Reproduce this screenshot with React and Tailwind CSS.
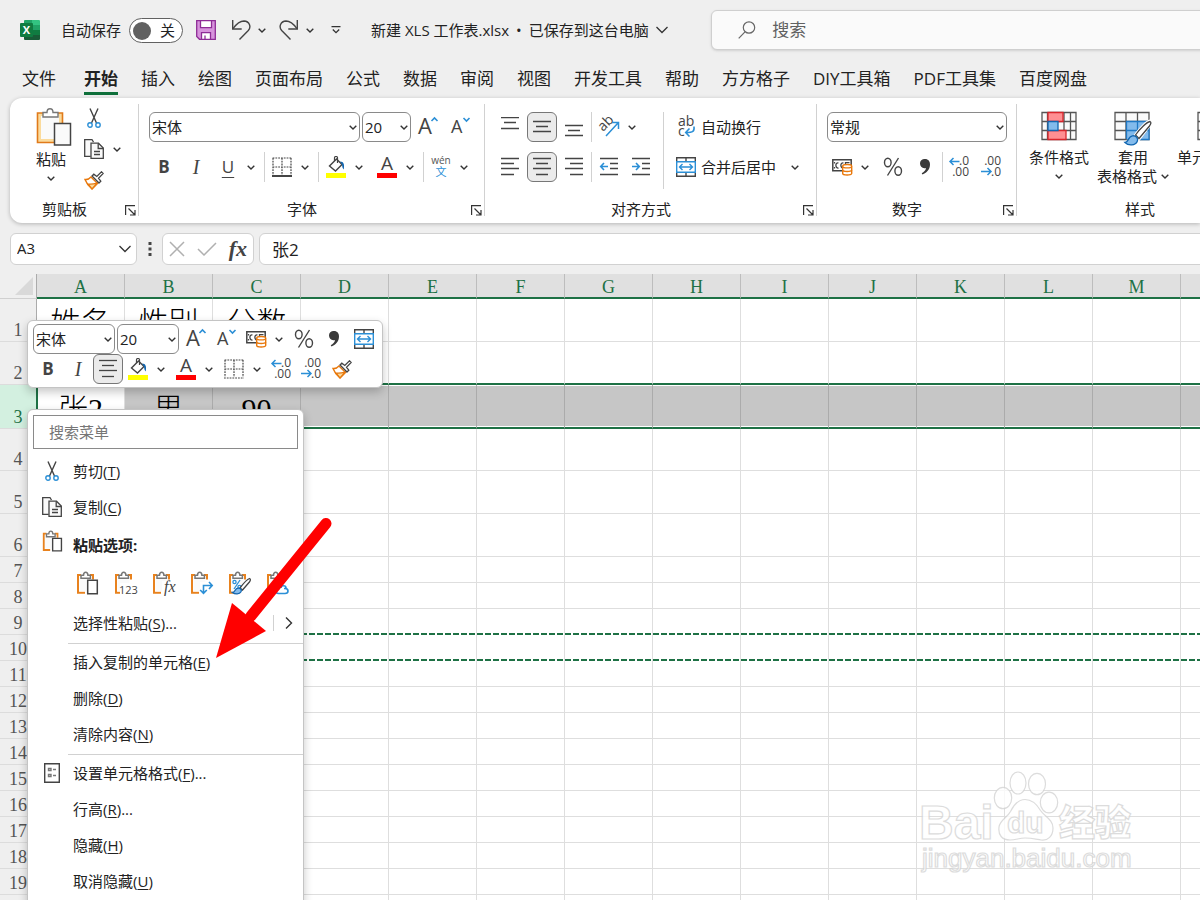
import React from 'react';
import clsx from 'clsx';

/* ---------- icons ---------- */

const Chevron = ({ className = 'w-2 h-[5px]' }) => (
    <svg viewBox="0 0 8 5" className={className} fill="none" stroke="#333" strokeWidth="1.4">
        <path d="M.7.7 4 4 7.3.7" />
    </svg>
);

const WideChevron = () => (
    <svg width="12" height="8" viewBox="0 0 12 8" fill="none" stroke="#333" strokeWidth="1.3">
        <path d="M.5 1 6 6.5 11.5 1" />
    </svg>
);

const ExcelLogo = () => (
    <svg width="20" height="20" viewBox="0 0 20 20" className="shrink-0">
        <path d="M5 0h7v5H4V1a1 1 0 0 1 1-1z" fill="#21a366" />
        <path d="M12 0h7a1 1 0 0 1 1 1v4h-8z" fill="#33c481" />
        <path d="M4 5h8v5H4z" fill="#107c41" />
        <path d="M12 5h8v5h-8z" fill="#21a366" />
        <path d="M4 10h8v10H5a1 1 0 0 1-1-1z" fill="#185c37" />
        <path d="M12 10h8v5h-8z" fill="#107c41" />
        <path d="M12 15h8v4a1 1 0 0 1-1 1h-7z" fill="#185c37" />
        <rect y="3" width="13" height="14" rx="1" fill="#107c41" />
        <text x="6.5" y="14" textAnchor="middle" fontSize="11" fontWeight="700" fill="#fff">X</text>
    </svg>
);

const SaveIcon = () => (
    <svg width="20" height="20" viewBox="0 0 20 20" stroke="#8e2c96" strokeWidth="1.3">
        <path d="M.7.7h18.6v18.6H3.500L.7 16.500z" fill="#d793dc" />
        <path d="M4.500.7h11v7h-11z" fill="#fff" />
        <path d="M5.500 19.3v-6.6h9v6.6z" fill="#fff" />
        <path d="M9 15.500v3.8" fill="none" />
    </svg>
);

const UndoIcon = ({ className }) => (
    <svg width="20" height="22" viewBox="0 0 20 22" className={className} fill="none" stroke="#444" strokeWidth="1.4">
        <path d="M1.7 1v9h9" />
        <path d="M2 9.700C5 5.500 8.500 2 13 2c5.500.3 7.500 6 4.300 9.500L8.500 20.500" />
    </svg>
);

const SearchIcon = () => (
    <svg width="18" height="18" viewBox="0 0 18 18" fill="none" stroke="#666" strokeWidth="1.2">
        <circle cx="11" cy="6.5" r="5.7" />
        <path d="M7 10.800.7 17.300" />
    </svg>
);

const PasteLarge = () => (
    <svg width="36" height="38" viewBox="0 0 36 38" className="self-end">
        <path d="M1.500 5h25v29.500h-25z" fill="#fbdb9c" stroke="#e07a1a" strokeWidth="1.6" />
        <path d="M5 8h18v23H5z" fill="#fafafa" />
        <path d="M7 9V4.500h4c0-5 6-5 6 0h5V9z" fill="#fff" stroke="#777" strokeWidth="1.4" />
        <path d="M18.500 15.500h16v21.500h-16z" fill="#fafafa" stroke="#444" strokeWidth="1.5" />
    </svg>
);

const CutIcon = () => (
    <svg width="14" height="20" viewBox="0 0 14 20" fill="none" strokeWidth="1.4">
        <path d="M3 .5 9.500 15M11 .5 4.500 15" stroke="#444" />
        <circle cx="3" cy="17" r="2.200" stroke="#2b8fd6" />
        <circle cx="11" cy="17" r="2.200" stroke="#2b8fd6" />
    </svg>
);

const CopyIcon = () => (
    <svg width="20" height="20" viewBox="0 0 20 20" fill="#fafafa" stroke="#444" strokeWidth="1.3">
        <path d="M9.500 3 8 .7H.7v16.600h6" />
        <path d="M7 4.200h7.500l4.800 4.800v10.300H7z" />
        <path d="M14.200 4.500v5h5M10 12.500h6M10 15.500h6" fill="none" />
    </svg>
);

const BrushIcon = () => (
    <svg width="20" height="19" viewBox="0 0 20 19">
        <path d="M1 8.500c2 .3 4-.3 6-2.500l6.500 6.500c-1.500 1.500-3.500 3.500-5.500 5.500C5 15.500 2.500 12.500 1 8.500z" fill="#fff" stroke="#e8780c" strokeWidth="1.4" />
        <path d="M4 13c3 .5 5 .3 9-.8L8 17.800z" fill="#fbdb9c" stroke="#e8780c" strokeWidth="1.2" />
        <path d="m8 5 1.800-1.800 3 2.300L17.500.8l1.700 1.700-4.700 4.700 2.300 3-1.800 1.800z" fill="#fff" stroke="#444" strokeWidth="1.3" />
    </svg>
);

const Launcher = () => (
    <svg width="11" height="11" viewBox="0 0 11 11" fill="none" stroke="#333" strokeWidth="1.2">
        <path d="M.6 10V.6H10M3.500 3.500l6 6M10 5v5H5" />
    </svg>
);

const GrowFont = ({ down }) => (
    <svg width="22" height="20" viewBox="0 0 22 20" className="overflow-visible">
        <text x={down ? 2 : 1} y={down ? 16 : 17} fontSize={down ? 18 : 22} fill="#444">A</text>
        <path d={down ? 'M14.500 1l3 3 3-3' : 'M14.500 4l3-3 3 3'} fill="none" stroke="#2b8fd6" strokeWidth="1.6" />
    </svg>
);

const BordersIcon = ({ bottom }) => (
    <svg width="20" height="20" viewBox="0 0 20 20" fill="none" stroke="#444" strokeWidth="1.2">
        <path d="M.6 1h18.800M.6 10h18.800M1 1v17M10 1v17M19 1v17" strokeDasharray="1.800 1" />
        <path d="M0 19h20" strokeWidth={bottom ? 2 : 1} strokeDasharray={bottom ? undefined : '1.8 1'} />
    </svg>
);

const FillIcon = () => (
    <svg width="20" height="22" viewBox="0 0 20 22">
        <path d="M10.500 3 3.500 10l6 5 6.500-6.500z" fill="#fff" stroke="#444" strokeWidth="1.4" />
        <path d="M8.500 5V1.800c0-1.800 3-1.800 3 0V7" fill="none" stroke="#444" strokeWidth="1.2" />
        <path d="M14 5.500c4 0 4.500 3 3.800 8-1.300-1-1.600-3-1.800-5z" fill="#1166b0" />
        <path d="M0 17h20v5H0z" fill="#ff0" />
    </svg>
);

const FontColorIcon = () => (
    <svg width="20" height="22" viewBox="0 0 20 22" className="overflow-visible">
        <text x="10" y="14" textAnchor="middle" fontSize="19" fill="#444">A</text>
        <path d="M0 17h20v5H0z" fill="red" />
    </svg>
);

const PhoneticIcon = () => (
    <svg width="22" height="22" viewBox="0 0 22 22" textAnchor="middle" className="overflow-visible">
        <text x="11" y="8" fontSize="10" fill="#555">wén</text>
        <text x="11" y="20" fontSize="11" fill="#2b8fd6">文</text>
    </svg>
);

/* lines: [x1, x2, y] */
const Lines = ({ lines, children }) => (
    <svg width="20" height="20" viewBox="0 0 20 20" fill="none">
        {lines.map(([a, b, y]) => (
            <path key={y} d={`M${a} ${y}.5H${b}`} stroke="#444" strokeWidth="1.3" />
        ))}
        {children}
    </svg>
);

const AlignTop = () => <Lines lines={[[1, 19, 0], [4, 16, 5], [1, 19, 11]]} />;
const AlignMiddle = () => <Lines lines={[[1, 19, 4], [4, 16, 9], [1, 19, 14]]} />;
const AlignBottom = () => <Lines lines={[[1, 19, 8], [4, 16, 13], [1, 19, 18]]} />;
const AlignLeft = () => <Lines lines={[[1, 19, 1], [1, 14, 6], [1, 19, 11], [1, 14, 17]]} />;
const AlignCenter = () => <Lines lines={[[1, 19, 1], [4, 16, 6], [1, 19, 11], [4, 16, 17]]} />;
const AlignRight = () => <Lines lines={[[1, 19, 1], [6, 19, 6], [1, 19, 11], [6, 19, 17]]} />;

const Outdent = () => (
    <Lines lines={[[1, 19, 1], [11, 19, 6], [11, 19, 11], [1, 19, 17]]}>
        <path d="M9 9.500H2M5 6 1.700 9.500 5 13" stroke="#2b8fd6" strokeWidth="1.6" />
    </Lines>
);

const Indent = () => (
    <Lines lines={[[1, 19, 1], [11, 19, 6], [11, 19, 11], [1, 19, 17]]}>
        <path d="M1 9.500h7M5 6l3.300 3.500L5 13" stroke="#2b8fd6" strokeWidth="1.6" />
    </Lines>
);

const OrientIcon = () => (
    <svg width="22" height="22" viewBox="0 0 22 22" className="overflow-visible">
        <text x="5" y="16" fontSize="14" fill="#444" transform="rotate(-45 5 16)">ab</text>
        <path d="M8 20 20 7M14 6.500h6.500V13" fill="none" stroke="#2b8fd6" strokeWidth="1.5" />
    </svg>
);

const WrapIcon = () => (
    <svg width="20" height="22" viewBox="0 0 20 22" className="overflow-visible">
        <text x="2" y="10" fontSize="14" fill="#444">ab</text>
        <text x="2" y="20" fontSize="14" fill="#444">c</text>
        <path d="M18 10.500c.6 5-1 6-8 6M13.500 12.500 9.700 16.500l3.800 4" fill="none" stroke="#2b8fd6" strokeWidth="1.6" />
    </svg>
);

const MergeIcon = () => (
    <svg width="20" height="20" viewBox="0 0 20 20" fill="none" stroke="#444" strokeWidth="1.4">
        <path d="M.7.7h18.600v18.600H.7zM10 1v18" />
        <path d="M.7 4.700h18.600v10.600H.7z" fill="#fff" stroke="#2b8fd6" />
        <path d="M4 10h12M6.500 7 3.500 10l3 3M13.500 7l3 3-3 3" stroke="#2b8fd6" />
    </svg>
);

const AccountingIcon = () => (
    <svg width="21" height="18" viewBox="0 0 21 18" fill="none">
        <path d="M.8 1.800h18.400v11H.8z" stroke="#444" strokeWidth="1.5" />
        <path d="M6.500 5C3 4 3 10.500 6.500 10M11.500 5C8 4 8 10.500 11.500 10M13.500 6V4.600h4M2.500 4v1.500M2.500 9v1.500" stroke="#444" strokeWidth="1.3" />
        <path d="M10.700 8.500v7c0 2 9 2 9 0v-7" fill="#fff" stroke="#e8780c" strokeWidth="1.4" />
        <ellipse cx="15.2" cy="8.2" rx="4.5" ry="1.7" fill="#fff" stroke="#e8780c" strokeWidth="1.4" />
        <path d="M10.700 12c0 2 9 2 9 0" stroke="#e8780c" strokeWidth="1.4" />
    </svg>
);

const PercentIcon = () => (
    <svg width="20" height="20" viewBox="0 0 20 20" fill="none" stroke="#444" strokeWidth="1.4">
        <ellipse cx="4.8" cy="5.5" rx="3.3" ry="4.3" />
        <ellipse cx="15.2" cy="14" rx="3.3" ry="4.3" />
        <path d="M15.500 1 4.500 18.500" />
    </svg>
);

const CommaIcon = () => (
    <svg width="12" height="18" viewBox="0 0 12 18" fill="#3a3a3a">
        <path d="M5 1c4-.5 6 2 6 5.500 0 5-3.500 8.500-7.500 10l-.8-1.200c2.300-1.200 4-3 4.300-5.300C3.500 11 1 8.700 1 5.500 1 3 2.500 1.200 5 1z" />
    </svg>
);

const DecimalIcon = ({ less }) => (
    <svg width="22" height="22" viewBox="0 0 22 22" fill="#444" fontSize="12" textAnchor="end" className="overflow-visible">
        <text x="20" y="9">{less ? '.00' : '.0'}</text>
        <text x="20" y="20">{less ? '.0' : '.00'}</text>
        <path
            d={less ? 'M0 15.500h10M6.500 12l3.500 3.500L6.500 19' : 'M10.500 5.500H1M4.500 2 1 5.500 4.500 9'}
            fill="none"
            stroke="#2b8fd6"
            strokeWidth="1.5"
        />
    </svg>
);

const ConditionalIcon = () => (
    <svg width="36" height="30" viewBox="0 0 36 30" strokeWidth="1.3">
        <path d="M1 1.500h34v27H1zM1 10.500h34M1 19.500h34M6.500 1.500v27M29.500 1.500v27M23 1.500v27" fill="#fafafa" stroke="#555" />
        <path d="M7 1.500h15v9H7zM7 19.500h18v9H7z" fill="#ff8f92" stroke="#d8262c" />
        <path d="M7 10.500h10v9H7z" fill="#83bbec" stroke="#1166b0" />
    </svg>
);

const TableFormatIcon = () => (
    <svg width="40" height="36" viewBox="0 0 40 36" strokeWidth="1.3">
        <path d="M2 1.500h34v27H2zM2 10.500h34M2 19.500h34M13 1.500v27M24.500 1.500v27" fill="#fafafa" stroke="#555" />
        <path d="M13.500 10.500H36v18H13.500z" fill="#83bbec" />
        <path d="M13.500 28V10.500H36M13.500 19.500H36M24.500 10.500v18M36 10.500v18H26" fill="none" stroke="#1f78c4" />
        <path d="M37 10c1.500.8 1 2-.5 4.500L26 28l-4-3.500C27 17.500 34 10.500 37 10z" fill="#fff" stroke="#fff" strokeWidth="3" />
        <path d="M37 10.500c1.500.8 1 2-.5 4.500L26 27.500 22.500 24C27 17.500 34 11 37 10.500z" fill="#fff" stroke="#444" />
        <path d="M12 31.500c4 .2 2.500-6 7.500-6.700 3.500-.5 6 2.500 4.800 5.500-1.800 4.500-9 4.700-12.300 1.200z" fill="#83bbec" stroke="#1166b0" />
    </svg>
);

const CellStyleIcon = () => (
    <svg width="36" height="30" viewBox="0 0 36 30" strokeWidth="1.3">
        <path d="M1 1.500h34v27H1zM1 10.500h34M1 19.500h34M12 1.500v27" fill="#fafafa" stroke="#555" />
        <path d="M7 10.500h22v12H7z" fill="#83bbec" stroke="#1166b0" />
    </svg>
);

/* Clipboard with a small drawing in its lower right corner */
const ClipIcon = ({ size = 24, children }) => (
    <svg width={size} height={size} viewBox="0 0 24 24" fill="none" className="overflow-visible">
        <path d="M10 21.800H3V4h3M15 4h3v4.500" stroke="#e8821e" strokeWidth="2" />
        <path d="M4.500 5.500h12v14.800h-12z" fill="#fafafa" />
        <path d="M6 7.300V4.200h2.500c.2-4 4.200-4 4.400 0h2.500v3.100z" fill="#fff" stroke="#777" strokeWidth="1.5" />
        {children}
    </svg>
);

const ClipPage = ({ size }) => (
    <ClipIcon size={size}>
        <path d="M12.700 9.200h9.600v13.600h-9.600z" fill="#fff" stroke="#444" strokeWidth="1.5" />
    </ClipIcon>
);

const ClipValues = () => (
    <ClipIcon>
        <path d="M7 12h17v12H7z" fill="#fff" />
        <text x="6" y="23" fontSize="11" fill="#444">123</text>
    </ClipIcon>
);

const ClipFormula = () => (
    <ClipIcon>
        <path d="M11 10h12v14H11z" fill="#fff" />
        <text x="13" y="21" fontSize="16" fontStyle="italic" fontFamily="Liberation Serif, serif" fill="#444">fx</text>
    </ClipIcon>
);

const ClipTranspose = () => (
    <ClipIcon>
        <path d="M11 11h12v13H11z" fill="#fff" />
        <path d="M14.500 22V14.500H23M20 11l3.200 3.500L20 18M11.200 19l3.300 3.300 3.300-3.300" stroke="#2b8fd6" strokeWidth="1.6" />
    </ClipIcon>
);

const ClipFormat = () => (
    <ClipIcon>
        <circle cx="7.500" cy="11" r="1.600" stroke="#2b8fd6" strokeWidth="1.300" />
        <circle cx="12.500" cy="16" r="1.600" stroke="#2b8fd6" strokeWidth="1.300" />
        <path d="m13 9-6 9" stroke="#2b8fd6" strokeWidth="1.300" />
        <path d="M22.500 7.500c1.500.5 1 2-.3 3.800L15.500 19 13 17c3-4 6.500-8.500 9.500-9.500z" fill="#fff" stroke="#444" strokeWidth="1.3" />
        <path d="M5.500 21.500c3 0 2-4 5.500-4.400 2.500-.2 4 1.800 3 3.700-1.500 2.700-6 2.700-8.500.7z" fill="#83bbec" stroke="#1166b0" strokeWidth="1.3" />
    </ClipIcon>
);

const ClipLink = () => (
    <ClipIcon>
        <path d="M11 14h12v10H11z" fill="#fff" />
        <path d="M15 22.500h-1.500c-3.500 0-3.500-5 0-5H15M14 22.500h6c4 0 4-5 0-5h-1M16 17c0-3 5-3 5 0" stroke="#2b8fd6" strokeWidth="1.6" />
    </ClipIcon>
);

const FormatCellsIcon = () => (
    <svg width="16" height="20" viewBox="0 0 16 20" fill="none" stroke="#444">
        <path d="M.7.7h14.600v18.600H.7z" strokeWidth="1.4" />
        <path d="M4.500 5.500h2.500v2H4.500zM4.500 11.500h2.500v2H4.500z" stroke="#777" strokeWidth="1.4" />
        <path d="M9 6.500h3M9 12.500h3" stroke="#777" strokeWidth="1.4" />
    </svg>
);

/* ---------- small controls ---------- */

const IconButton = ({ label, active, children }) => (
    <button
        aria-label={label}
        className={clsx(
            'flex h-[30px] w-[30px] shrink-0 items-center justify-center rounded-md text-[#444]',
            active && 'border border-[#777] bg-[#ebebeb]'
        )}
    >
        {children}
    </button>
);

const DropButton = ({ label }) => (
    <button aria-label={`${label}选项`} className="flex h-[30px] w-4 shrink-0 items-center justify-center">
        <Chevron />
    </button>
);

const Split = ({ label, className, children }) => (
    <div className={clsx('flex', className)}>
        <IconButton label={label}>{children}</IconButton>
        <DropButton label={label} />
    </div>
);

const Select = ({ label, value, className }) => (
    <div className={clsx('relative shrink-0', className)}>
        <select
            aria-label={label}
            defaultValue={value}
            className="block h-[30px] w-full appearance-none rounded-md border border-[#8a8a8a] bg-white pl-[2px] text-[15px] text-[#222]"
        >
            <option>{value}</option>
        </select>
        <span className="pointer-events-none absolute inset-y-0 right-[3px] flex items-center">
            <Chevron />
        </span>
    </div>
);

const Divider = ({ className = 'ml-[5px] mr-[2px]' }) => (
    <div className={clsx('h-[30px] w-px shrink-0 bg-[#d1d1d1]', className)} />
);

const BoldGlyph = () => <span className="text-[17px] font-bold">B</span>;
const ItalicGlyph = () => <span className="font-['Liberation_Serif',serif] text-[20px] italic">I</span>;

/* ---------- header ---------- */

const TitleBar = () => (
    <header className="flex h-[60px] shrink-0 items-center pl-5 text-[15px] text-[#222]">
        <ExcelLogo />
        <label htmlFor="autosave" className="ml-[21px] shrink-0">自动保存</label>
        <div className="relative ml-2 h-[25px] w-[54px] shrink-0">
            <input
                id="autosave"
                type="checkbox"
                className="block h-full w-full appearance-none rounded-full border border-[#616161] bg-white before:ml-[3px] before:mt-[3px] before:block before:size-[18px] before:rounded-full before:bg-[#616161]"
            />
            <span className="pointer-events-none absolute inset-y-0 right-2 flex items-center">关</span>
        </div>
        <button aria-label="保存" className="ml-[13px] shrink-0"><SaveIcon /></button>
        <button aria-label="撤消" className="ml-[15px] shrink-0"><UndoIcon /></button>
        <button aria-label="撤消选项" className="ml-[7px] shrink-0"><Chevron /></button>
        <button aria-label="恢复" className="ml-[13px] shrink-0"><UndoIcon className="-scale-x-100" /></button>
        <button aria-label="恢复选项" className="ml-[7px] shrink-0"><Chevron /></button>
        <button aria-label="自定义快速访问工具栏" className="ml-[17px] shrink-0">
            <svg width="10" height="8" viewBox="0 0 10 8" fill="none" stroke="#333" strokeWidth="1.3">
                <path d="M.5.7h9M1.800 3.500 5 6.700l3.200-3.200" />
            </svg>
        </button>
        <button className="ml-[30px] flex shrink-0 items-center gap-[7px]">
            <span>新建 XLS 工作表.xlsx</span>
            <span>•</span>
            <span>已保存到这台电脑</span>
            <WideChevron />
        </button>
        <label className="-mr-2 ml-auto flex h-10 w-[41.4vw] items-center gap-4 rounded-md border border-[#cfcfcf] bg-[#fafafa] pl-[26px] shadow-sm">
            <SearchIcon />
            <input
                aria-label="搜索"
                placeholder="搜索"
                className="min-w-0 flex-1 bg-transparent text-[17px] outline-none placeholder:text-[#616161]"
            />
        </label>
    </header>
);

const tabs = ['文件', '开始', '插入', '绘图', '页面布局', '公式', '数据', '审阅', '视图', '开发工具', '帮助', '方方格子', 'DIY工具箱', 'PDF工具集', '百度网盘'];

const TabBar = () => (
    <nav className="flex h-[38px] shrink-0 gap-[23px] pl-[22px] pt-[5px] text-[17px] leading-[27px] text-[#222]">
        {tabs.map((tab) => (
            <button
                key={tab}
                className={clsx(
                    'h-[30px] shrink-0 border-b-[3px]',
                    tab === '开始' ? 'ml-[5px] border-[#0f703b] font-bold' : 'border-transparent'
                )}
            >
                {tab}
            </button>
        ))}
    </nav>
);

/* ---------- ribbon ---------- */

const Group = ({ title, launcher = true, className, children }) => (
    <>
        <section className={clsx('flex shrink-0 flex-col', className)}>
            <div className="h-[95px]">{children}</div>
            <div className="flex items-center text-[15px] leading-5 text-[#222]">
                <span className="flex-1 text-center">{title}</span>
                {launcher && (
                    <button aria-label={`${title}设置`} className="mt-[3px] flex w-[19px] justify-center pl-1"><Launcher /></button>
                )}
            </div>
        </section>
        <div className="h-28 w-px shrink-0 bg-[#d1d1d1]" />
    </>
);

const LargeButton = ({ icon, lines, className, chevron }) => (
    <button className={clsx('flex shrink-0 flex-col items-center text-[15px] leading-[19px] text-[#222]', className)}>
        <span className="flex h-[37px] items-start">{icon}</span>
        <span>{lines[0]}</span>
        <span className="flex h-[19px] items-center gap-1 whitespace-nowrap">
            {lines[1]}
            {chevron && <Chevron />}
        </span>
    </button>
);

const Ribbon = () => (
    <div className="ml-[10px] flex h-[125px] shrink-0 overflow-hidden rounded-l-xl bg-white pt-[6px] shadow-[0_1px_4px_rgba(0,0,0,0.25)]">
        <Group title="剪贴板" className="w-32">
            <div className="flex pl-[20px]">
                <button className="flex w-[42px] flex-col items-center pt-[4px] text-[15px] leading-5 text-[#222]">
                    <PasteLarge />
                    <span className="mt-[3px]">粘贴</span>
                    <Chevron className="mt-[7px] h-[5px] w-2" />
                </button>
                <div className="ml-[11px] flex flex-col gap-[3px]">
                    <button aria-label="剪切" className="flex h-7 w-[22px] items-center justify-center"><CutIcon /></button>
                    <div className="flex">
                        <button aria-label="复制" className="flex h-7 w-[22px] items-center justify-center"><CopyIcon /></button>
                        <button aria-label="复制选项" className="ml-1 flex h-7 w-4 items-center justify-center"><Chevron /></button>
                    </div>
                    <button aria-label="格式刷" className="flex h-7 w-[22px] items-center justify-center"><BrushIcon /></button>
                </div>
            </div>
        </Group>

        <Group title="字体" className="w-[345px]">
            <div className="flex flex-col gap-[10px] pl-[10px] pt-2">
                <div className="flex gap-[2px]">
                    <Select label="字体" value="宋体" className="w-[211px]" />
                    <Select label="字号" value="20" className="w-[49px]" />
                    <IconButton label="增大字号"><GrowFont /></IconButton>
                    <IconButton label="减小字号"><GrowFont down /></IconButton>
                </div>
                <div className="flex">
                    <div className="flex gap-[2px]">
                        <IconButton label="加粗"><BoldGlyph /></IconButton>
                        <IconButton label="倾斜"><ItalicGlyph /></IconButton>
                        <Split label="下划线"><span className="text-[17px] underline underline-offset-4">U</span></Split>
                    </div>
                    <Divider />
                    <Split label="边框"><BordersIcon bottom /></Split>
                    <Divider />
                    <Split label="填充颜色" className="mr-[5px]"><FillIcon /></Split>
                    <Split label="字体颜色"><FontColorIcon /></Split>
                    <Divider />
                    <Split label="拼音"><PhoneticIcon /></Split>
                </div>
            </div>
        </Group>

        <Group title="对齐方式" className="w-[331px]">
            <div className="flex pl-[10px] pt-2">
                <div className="flex flex-col gap-[10px]">
                    <div className="flex">
                        <div className="flex gap-[2px]">
                            <IconButton label="顶端对齐"><AlignTop /></IconButton>
                            <IconButton label="垂直居中" active><AlignMiddle /></IconButton>
                            <IconButton label="底端对齐"><AlignBottom /></IconButton>
                        </div>
                        <Divider className="mx-[2px]" />
                        <Split label="方向"><OrientIcon /></Split>
                    </div>
                    <div className="flex">
                        <div className="flex gap-[2px]">
                            <IconButton label="左对齐"><AlignLeft /></IconButton>
                            <IconButton label="居中" active><AlignCenter /></IconButton>
                            <IconButton label="右对齐"><AlignRight /></IconButton>
                        </div>
                        <Divider className="mx-[2px]" />
                        <div className="flex gap-[2px]">
                            <IconButton label="减少缩进量"><Outdent /></IconButton>
                            <IconButton label="增加缩进量"><Indent /></IconButton>
                        </div>
                    </div>
                </div>
                <div className="ml-[7px] h-[77px] w-px bg-[#d1d1d1]" />
                <div className="ml-3 flex flex-col gap-[10px] text-[15px] text-[#222]">
                    <button className="flex h-[30px] items-center gap-[5px]">
                        <WrapIcon />
                        自动换行
                    </button>
                    <div className="flex">
                        <button className="flex h-[30px] items-center gap-[5px]">
                            <MergeIcon />
                            合并后居中
                        </button>
                        <div className="ml-[11px]"><DropButton label="合并" /></div>
                    </div>
                </div>
            </div>
        </Group>

        <Group title="数字" className="w-[199px]">
            <div className="flex flex-col gap-[10px] pl-[10px] pt-2">
                <Select label="数字格式" value="常规" className="w-[180px]" />
                <div className="flex">
                    <Split label="会计数字格式" className="mr-[5px]"><AccountingIcon /></Split>
                    <div className="flex gap-[2px]">
                        <IconButton label="百分比样式"><PercentIcon /></IconButton>
                        <IconButton label="千位分隔样式"><CommaIcon /></IconButton>
                    </div>
                    <Divider className="mx-[2px]" />
                    <div className="flex gap-[2px]">
                        <IconButton label="增加小数位数"><DecimalIcon /></IconButton>
                        <IconButton label="减少小数位数"><DecimalIcon less /></IconButton>
                    </div>
                </div>
            </div>
        </Group>

        <Group title="样式" launcher={false} className="w-[246px]">
            <div className="flex gap-[7px] pl-3 pt-[7px]">
                <LargeButton icon={<ConditionalIcon />} lines={['条件格式', '']} chevron className="w-[60px]" />
                <LargeButton icon={<TableFormatIcon />} lines={['套用', '表格格式']} chevron className="w-[74px]" />
                <LargeButton icon={<CellStyleIcon />} lines={['单元格样式', '']} chevron className="w-[75px]" />
            </div>
        </Group>
    </div>
);

/* ---------- formula bar ---------- */

const FormulaBar = () => (
    <div className="flex h-[51px] shrink-0 items-center pl-[10px] text-[#222]">
        <div className="flex h-8 w-[127px] shrink-0 items-center rounded-md border border-[#d1d1d1] bg-white pl-[6px] pr-[5px]">
            <input aria-label="名称框" defaultValue="A3" className="min-w-0 flex-1 text-[15px] outline-none" />
            <button aria-label="名称列表"><WideChevron /></button>
        </div>
        <svg width="4" height="14" viewBox="0 0 4 14" className="ml-[11px] shrink-0" fill="#444">
            <path d="M.5 0h3v3h-3zM.5 5.500h3v3h-3zM.5 11h3v3h-3z" />
        </svg>
        <div className="ml-[10px] flex h-8 w-[92px] shrink-0 items-center justify-between rounded-md border border-[#d1d1d1] bg-white px-[6px]">
            <button aria-label="取消">
                <svg width="16" height="16" viewBox="0 0 16 16" fill="none" stroke="#b0b0b0" strokeWidth="1.5">
                    <path d="m1 1 14 14M15 1 1 15" />
                </svg>
            </button>
            <button aria-label="输入">
                <svg width="20" height="14" viewBox="0 0 20 14" fill="none" stroke="#b0b0b0" strokeWidth="1.5">
                    <path d="m1 7 6 6L19 1" />
                </svg>
            </button>
            <button aria-label="插入函数" className="font-['Liberation_Serif',serif] text-[22px] font-bold italic leading-6 text-[#444]">fx</button>
        </div>
        <input
            aria-label="编辑栏"
            defaultValue="张2"
            className="-mr-2 ml-[5px] h-8 min-w-0 flex-1 rounded-md border border-[#d1d1d1] bg-white pl-3 text-[17px] outline-none"
        />
    </div>
);

/* ---------- sheet ---------- */

const columns = ['A', 'B', 'C', 'D', 'E', 'F', 'G', 'H', 'I', 'J', 'K', 'L', 'M', 'N'];
const rows = Array.from({ length: 20 }, (_, i) => i + 1);
const values = {
    A1: '姓名', B1: '性别', C1: '分数',
    A3: '张2', B3: '男', C3: '90',
};

const rowHeight = (row) => {
    if (row === 3) return 'h-11';
    if (row === 4) return 'h-[42px]';
    return row < 7 ? 'h-[43px]' : 'h-[26px]';
};

const cellClass = (col, row) => {
    if (row === 3) {
        return clsx(
            'border-b-2 border-b-[#1e7145] border-r',
            col === 'A' ? 'border-r-[#dedede] bg-white shadow-[inset_1px_0_0_#1e7145]' : 'border-r-[#ababab] bg-[#c6c6c6] shadow-[inset_0_1px_0_#fff,inset_0_-1px_0_#fff]'
        );
    }
    if (row === 2) return 'border-r border-b-2 border-r-[#dedede] border-b-[#1e7145]';
    // marching ants around the copied row
    if (row === 9 || row === 10) {
        return 'border-r border-[#dedede] bg-[repeating-linear-gradient(90deg,#1e7145_0px,#1e7145_6px,transparent_6px,transparent_8px)] bg-[length:100%_2px] bg-bottom bg-no-repeat';
    }
    return 'border-r border-b border-[#dedede]';
};

const Sheet = () => (
    <table className="w-[1269px] table-fixed border-separate border-spacing-0 bg-white font-['Liberation_Serif','Noto_Sans_CJK_SC',serif]">
        <colgroup>
            <col className="w-[37px]" />
            {columns.map((c) => <col key={c} className="w-[88px]" />)}
        </colgroup>
        <thead>
            <tr className="h-[25px]">
                <th aria-label="全选" className="border-r border-b border-r-[#ababab] border-b-[#d0d0d0] bg-[#efefef] p-0">
                    <svg width="18" height="18" viewBox="0 0 18 18" className="ml-auto mr-[3px]">
                        <path d="M18 0v18H0z" fill="#d9d9d9" />
                    </svg>
                </th>
                {columns.map((c) => (
                    <th
                        key={c}
                        scope="col"
                        className="border-r border-b-2 border-r-[#bdbdbd] border-b-[#1e7145] bg-[#e0e0e0] p-0 pt-[3px] text-[18px] leading-5 font-normal text-[#1e7145]"
                    >
                        {c}
                    </th>
                ))}
            </tr>
        </thead>
        <tbody>
            {rows.map((row) => (
                <tr key={row} className={rowHeight(row)}>
                    <th
                        scope="row"
                        className={clsx(
                            'border-r border-b border-b-[#dcdcdc] p-0 align-bottom text-[18px] leading-[22px] font-normal',
                            row === 3 ? 'border-r-[#1e7145] bg-[#d3f0e0] text-[#1e7145]' : 'border-r-[#ababab] bg-[#efefef] text-[#555]'
                        )}
                    >
                        {row}
                    </th>
                    {columns.map((c) => (
                        <td key={c} className={clsx('p-0 pt-[5px] text-center text-[30px] leading-[34px] font-light text-black', cellClass(c, row))}>
                            {values[c + row]}
                        </td>
                    ))}
                </tr>
            ))}
        </tbody>
    </table>
);

/* ---------- popups ---------- */

const MiniToolbar = () => (
    <div className="absolute left-[27px] top-[46px] rounded-md border border-[#c4c4c4] bg-white py-[3px] pl-[5px] pr-[3px] shadow-[0_4px_10px_rgba(0,0,0,0.22)]">
        <div className="flex">
            <div className="mr-[2px] flex gap-[2px]">
                <Select label="字体" value="宋体" className="w-[82px]" />
                <Select label="字号" value="20" className="w-[62px]" />
            </div>
            <IconButton label="增大字号"><GrowFont /></IconButton>
            <IconButton label="减小字号"><GrowFont down /></IconButton>
            <Split label="会计数字格式" className="mr-[2px]"><AccountingIcon /></Split>
            <IconButton label="百分比样式"><PercentIcon /></IconButton>
            <IconButton label="千位分隔样式"><CommaIcon /></IconButton>
            <IconButton label="合并后居中"><MergeIcon /></IconButton>
        </div>
        <div className="flex">
            <IconButton label="加粗"><BoldGlyph /></IconButton>
            <IconButton label="倾斜"><ItalicGlyph /></IconButton>
            <IconButton label="居中" active><AlignCenter /></IconButton>
            <Split label="填充颜色" className="mr-[2px]"><FillIcon /></Split>
            <Split label="字体颜色" className="mr-[2px]"><FontColorIcon /></Split>
            <Split label="边框" className="mr-[2px]"><BordersIcon /></Split>
            <IconButton label="增加小数位数"><DecimalIcon /></IconButton>
            <IconButton label="减少小数位数"><DecimalIcon less /></IconButton>
            <IconButton label="格式刷"><BrushIcon /></IconButton>
        </div>
    </div>
);

const MenuItem = ({ icon, text, hotkey, more }) => (
    <button className="flex h-9 w-full items-center gap-[9px] pl-3 text-left">
        <span className="flex w-6 shrink-0 items-center justify-center">{icon}</span>
        <span>
            {text}(<u className="underline-offset-2">{hotkey}</u>){more && '...'}
        </span>
    </button>
);

const MenuLine = () => <div className="ml-10 mt-[2px] h-px bg-[#d1d1d1]" />;

const pasteOptions = [
    ['粘贴', ClipPage],
    ['值', ClipValues],
    ['公式', ClipFormula],
    ['转置', ClipTranspose],
    ['格式', ClipFormat],
    ['粘贴链接', ClipLink],
];

const ContextMenu = () => (
    <div className="absolute left-[27px] top-[135px] w-[277px] rounded-md border border-[#c4c4c4] bg-white pb-2 pt-[5px] text-[15px] text-[#222] shadow-[0_4px_10px_rgba(0,0,0,0.22)]">
        <div className="mb-1 px-[5px]">
            <input
                aria-label="搜索菜单"
                placeholder="搜索菜单"
                className="block h-[34px] w-full border border-[#8a8a8a] pl-[15px] outline-none placeholder:text-[#767676]"
            />
        </div>
        <MenuItem icon={<CutIcon />} text="剪切" hotkey="T" />
        <MenuItem icon={<CopyIcon />} text="复制" hotkey="C" />
        <div className="flex h-10 items-center gap-[9px] pl-3 font-bold">
            <span className="mb-2 flex w-6 justify-center"><ClipPage size={22} /></span>
            粘贴选项:
        </div>
        <div className="flex h-10 items-start pl-10">
            {pasteOptions.map(([name, Icon]) => (
                <button key={name} aria-label={name} className="flex h-9 w-[38px] items-center justify-center">
                    <Icon />
                </button>
            ))}
        </div>
        <div className="flex items-center">
            <MenuItem text="选择性粘贴" hotkey="S" more />
            <div className="h-4 w-px shrink-0 bg-[#d1d1d1]" />
            <button aria-label="更多粘贴选项" className="flex h-9 w-[29px] shrink-0 items-center justify-center">
                <svg width="8" height="12" viewBox="0 0 8 12" fill="none" stroke="#333" strokeWidth="1.4">
                    <path d="m1 .5 5.500 5.500L1 11.500" />
                </svg>
            </button>
        </div>
        <MenuLine />
        <MenuItem text="插入复制的单元格" hotkey="E" />
        <MenuItem text="删除" hotkey="D" />
        <MenuItem text="清除内容" hotkey="N" />
        <MenuLine />
        <MenuItem icon={<FormatCellsIcon />} text="设置单元格格式" hotkey="F" more />
        <MenuItem text="行高" hotkey="R" more />
        <MenuItem text="隐藏" hotkey="H" />
        <MenuItem text="取消隐藏" hotkey="U" />
    </div>
);

const Arrow = () => (
    <svg width="118" height="142" viewBox="0 0 118 142" className="pointer-events-none absolute left-[215px] top-[243px]">
        <path d="M111 6.500 36 99" stroke="red" strokeWidth="11" strokeLinecap="round" />
        <path d="M1 141 17 86l34 28z" fill="red" />
    </svg>
);

const Watermark = () => (
    <svg
        width="222"
        height="110"
        viewBox="0 0 222 110"
        className="pointer-events-none absolute bottom-[22px] right-[60px] overflow-visible opacity-80"
        fill="#fff"
        stroke="#d4d4d4"
        strokeWidth="1.2"
    >
        <text x="1" y="71" fontSize="48" fontWeight="700" fontFamily="Liberation Sans, sans-serif">Bai</text>
        <ellipse cx="85" cy="30" rx="8.7" ry="10.7" />
        <ellipse cx="100" cy="15" rx="8" ry="11" />
        <ellipse cx="119" cy="16" rx="8.5" ry="10.7" />
        <ellipse cx="131" cy="34.5" rx="8.7" ry="10.3" />
        <path d="M107 31.500c8 0 12 5 15.500 11 4 6 12.500 9 12.500 17.500 0 8-5 13-12 12-6-1-10-2-16-2s-9 2-15 2c-8 0-12-5-11-13 1-7 8-9 11.500-15.500 3-6 7-12 14.500-12z" />
        <text x="89" y="65" fontSize="30" fontWeight="700" fontFamily="Liberation Sans, sans-serif">du</text>
        <text x="141" y="68" fontSize="36" fontWeight="900" fontFamily="Noto Sans CJK SC, sans-serif">经验</text>
        <text x="4" y="99" fontSize="26" fontFamily="Liberation Sans, sans-serif">jingyan.baidu.com</text>
    </svg>
);

const App = () => (
    <div className="flex h-screen flex-col overflow-hidden bg-[#efefef] font-['Open_Sans','Noto_Sans_CJK_SC',sans-serif]">
        <TitleBar />
        <TabBar />
        <Ribbon />
        <FormulaBar />
        <main className="relative min-h-0 flex-1 overflow-hidden">
            <Sheet />
            <Watermark />
            <MiniToolbar />
            <ContextMenu />
            <Arrow />
        </main>
    </div>
);

export default App;
